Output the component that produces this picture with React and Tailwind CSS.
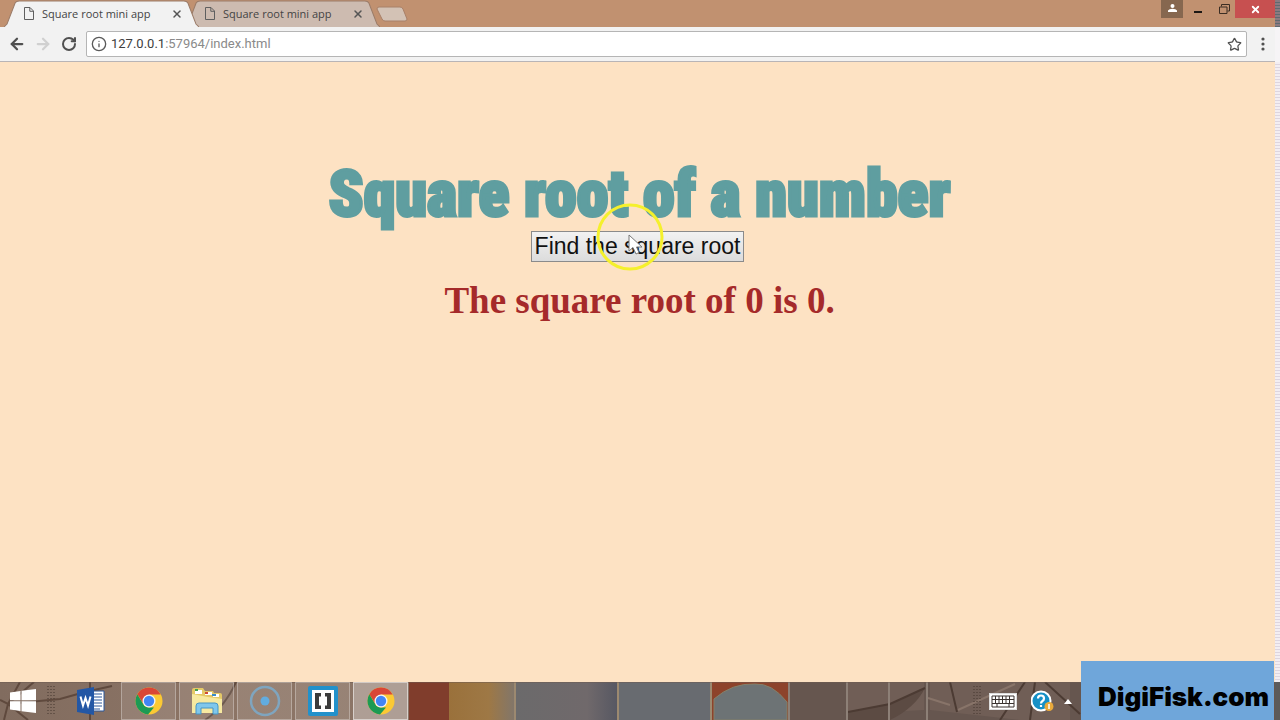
import React, { useState } from "react";
import { ArrowLeft, ArrowRight, RotateCw, Info, Star, X } from "lucide-react";

const PageIcon = () => (
  <svg width="10" height="13" viewBox="0 0 10 13" fill="none" stroke="#5f5f5f">
    <path d="M.5.5h5.5l3.5 3.5v8.5h-9zM5.8.7v3.6h3.5" />
  </svg>
);

const Tab = ({ title, active, onSelect }) => (
  <div
    className={`relative flex items-center w-[195px] h-[27px] pl-5 pr-4 ${
      active ? "z-10" : "-ml-[14px]"
    }`}
  >
    <svg
      className="absolute inset-0 w-full h-full"
      viewBox="0 0 193 27"
      preserveAspectRatio="none"
      aria-hidden="true"
    >
      <path
        d="M0 27 L3 24 L11 3 Q12 1 15 1 H178 Q181 1 182 3 L190 24 L193 27"
        fill={active ? "#f2f2f2" : "#cdbbb0"}
        stroke="#9b7c69"
      />
    </svg>
    <button
      type="button"
      onClick={onSelect}
      className="relative flex items-center flex-1 gap-2 whitespace-nowrap text-left text-[11px] leading-4 text-[#444]"
    >
      <PageIcon />
      {title}
    </button>
    <button type="button" aria-label="Close tab" className="relative text-[#555]">
      <X size={12} strokeWidth={3} />
    </button>
  </div>
);

const TitleBar = () => {
  const [activeTab, setActiveTab] = useState(0);
  const tabs = ["Square root mini app", "Square root mini app"];

  return (
    <div className="flex h-[27px] pl-1 bg-[#c19170]">
      {tabs.map((title, index) => (
        <Tab
          key={index}
          title={title}
          active={index === activeTab}
          onSelect={() => setActiveTab(index)}
        />
      ))}
      <button type="button" aria-label="New tab" className="self-center -ml-1">
        <svg width="32" height="16" viewBox="0 0 32 16">
          <path
            d="M3 1H24Q26 1 27 3L31 13Q31 15 29 15H9Q7 15 6 13L1 3Q1 1 3 1Z"
            fill="#d3c2b5"
            stroke="#a88068"
          />
        </svg>
      </button>
      <div className="flex ml-auto h-[18px]">
        <button
          type="button"
          aria-label="User"
          className="flex justify-center pt-1 w-[22px] bg-[#86674f]"
        >
          <svg width="9" height="8" viewBox="0 0 9 8" fill="#fff">
            <circle cx="4.500" cy="2" r="2" />
            <path d="M0 8V6.500Q1 4.800 4.500 4.800T9 6.500V8Z" />
          </svg>
        </button>
        <button
          type="button"
          aria-label="Minimize"
          className="flex items-center justify-center w-[30px]"
        >
          <svg width="8" height="10" viewBox="0 0 8 10">
            <path d="M0 7h8v2H0z" fill="#1d1713" />
          </svg>
        </button>
        <button
          type="button"
          aria-label="Restore"
          className="flex items-center justify-center w-[22px]"
        >
          <svg width="11" height="10" viewBox="0 0 11 10" fill="none" stroke="#3b2d23">
            <path d="M2.500 2.500V.5h8v6.500h-2" />
            <path d="M.5 3h7.500v6.500H.5z" />
          </svg>
        </button>
        <button
          type="button"
          aria-label="Close"
          className="flex items-center justify-center w-10 bg-[#c75050] text-white"
        >
          <X size={11} strokeWidth={4} />
        </button>
      </div>
    </div>
  );
};

const Toolbar = () => (
  <div className="flex items-center h-[35px] pl-2 bg-[#f2f2f2] border-b border-[#b8b4b6] text-[#505050]">
    <button type="button" aria-label="Back" className="w-[26px]">
      <ArrowLeft size={18} strokeWidth={3} />
    </button>
    <button type="button" aria-label="Forward" className="w-[26px] text-[#d0d0d0]">
      <ArrowRight size={18} strokeWidth={3} />
    </button>
    <button type="button" aria-label="Reload" className="w-[26px] pl-px">
      <RotateCw size={16} strokeWidth={3} />
    </button>
    <div className="flex items-center flex-1 h-[26px] px-1 bg-white border border-[#b5b5b5] rounded-xs">
      <Info size={16} className="text-[#5a5a5a]" />
      <div className="ml-1 flex-1 font-[Roboto,sans-serif] text-[13px] leading-4 text-[#8a8a8a]">
        <span className="text-[#404040]">127.0.0.1</span>:57964/index.html
      </div>
      <button type="button" aria-label="Bookmark">
        <Star size={15} strokeWidth={2} />
      </button>
    </div>
    <button type="button" aria-label="Menu" className="flex justify-center w-6 ml-1">
      <svg width="4" height="14" viewBox="0 0 4 14" fill="#505050">
        <circle cx="2" cy="2" r="1.600" />
        <circle cx="2" cy="7" r="1.600" />
        <circle cx="2" cy="12" r="1.600" />
      </svg>
    </button>
  </div>
);

// Mouse pointer with the yellow highlight ring
const Pointer = () => (
  <svg
    className="absolute left-1/2 top-0 -ml-[42px] -mt-[30px] pointer-events-none"
    width="70"
    height="70"
    viewBox="0 0 70 70"
    aria-hidden="true"
  >
    <circle cx="34" cy="36" r="32" fill="none" stroke="#f5f02c" strokeWidth="3" />
    <path
      d="M33 34V50L37 46.500L40 53L43 51.500L40.500 46H46Z"
      fill="#fff"
      stroke="#777"
    />
  </svg>
);

const Page = () => {
  const [result, setResult] = useState({ value: 0, root: 0 });

  const findRoot = () => {
    const value = Number(window.prompt("Enter a number"));
    setResult({ value, root: Math.sqrt(value) });
  };

  return (
    <main className="flex-1 flex flex-col items-center pt-[97px] bg-[#fde2c3]">
      <h1 className="pl-1 font-[Impact,'Roboto_Condensed','Liberation_Sans_Narrow',sans-serif] font-black text-[64px] leading-[72px] text-[#5f9ea0] [-webkit-text-stroke:3px_#5f9ea0]">
        Square root of a number
      </h1>
      <div className="relative">
        <button
          type="button"
          onClick={findRoot}
          className="block px-[3px] border border-[#8b8b8b] bg-linear-to-b from-[#f2f2f2] to-[#dcdcdc] font-['Liberation_Sans',Arial,sans-serif] text-[23px] leading-[29px] text-[#111]"
        >
          Find the square root
        </button>
        <Pointer />
      </div>
      <h2 className="mt-4 pl-1 font-['Liberation_Serif','Times_New_Roman',serif] font-bold text-[37px] leading-[46px] text-[#a52a2a]">
        The square root of {result.value} is {result.root}.
      </h2>
    </main>
  );
};

const ChromeLogo = () => (
  <svg width="28" height="28" viewBox="0 0 28 28">
    <circle cx="14" cy="14" r="13.500" fill="#fbc934" />
    <path d="M2.300 7.200A13.500 13.500 0 0 1 25.700 7.500H14L8.500 17Z" fill="#d94637" />
    <path d="M2.300 7.200L8.300 17.200A6.500 6.500 0 0 0 14 20.500H19L13 27.500A13.500 13.500 0 0 1 2.300 7.200Z" fill="#1c9a54" />
    <circle cx="14" cy="14" r="6.500" fill="#f4f4f4" />
    <circle cx="14" cy="14" r="5.200" fill="#4285f4" />
  </svg>
);

const WindowsLogo = () => (
  <svg width="26" height="24" viewBox="0 0 26 24" fill="#fff">
    <path d="M0 3.500L10.500 2V11.300H0zM11.500 1.800L26 0V11.300H11.500zM0 12.300H10.500V22L0 20.500zM11.500 12.300H26V24L11.500 22.200z" />
  </svg>
);

const WordLogo = () => (
  <svg width="28" height="28" viewBox="0 0 28 28">
    <path d="M14 4h13v20H14z" fill="#fff" stroke="#2b579a" />
    <path d="M17 7h8M17 10h8M17 13h8M17 16h8M17 19h8M17 22h6" stroke="#2b579a" />
    <path d="M0 3L17 0V28L0 25Z" fill="#2357a5" />
    <path d="M3.500 9.500L6 18.500L8.500 11L11 18.500L13.500 9.500" fill="none" stroke="#fff" strokeWidth="2" />
  </svg>
);

const ExplorerLogo = () => (
  <svg width="32" height="28" viewBox="0 0 32 28">
    <path d="M1 3Q1 1 3 1H12L14 4H22L23 6H29Q31 6 31 8V26H1Z" fill="#e5c967" />
    <path d="M4 3h7v4H4zM14 5h7v3h-7zM22 7h6v3h-6z" fill="#fff" />
    <path d="M4 2h3v2H4z" fill="#45a34c" />
    <path d="M14 5h3v2h-3z" fill="#d04a36" />
    <path d="M21 7h4v2h-4z" fill="#388bc7" />
    <path d="M1 7L17 10L31 12V26H1Z" fill="#f7e9a0" />
    <path d="M5 27V19Q5 16 8 16H24Q27 16 27 19V27H22V21H10V27Z" fill="#80c7ec" stroke="#4796c5" />
  </svg>
);

const RecorderLogo = () => (
  <svg width="32" height="32" viewBox="0 0 32 32">
    <circle cx="16" cy="16" r="14" fill="none" stroke="#7fa5bf" strokeWidth="2.500" />
    <circle cx="16" cy="16" r="4.500" fill="#62acdf" />
  </svg>
);

const BracketsLogo = () => (
  <svg width="30" height="30" viewBox="0 0 30 30">
    <rect width="30" height="30" rx="2" fill="#2291cb" />
    <rect x="4" y="4" width="22" height="22" fill="#fff" />
    <path d="M13 7H7V23H13V19.500H11V10.500H13zM17 7H23V23H17V19.500H19V10.500H17z" fill="#3b3b3b" />
  </svg>
);

const Grip = () => (
  <svg width="8" height="30" viewBox="0 0 8 30" aria-hidden="true">
    <path d="M1 0V30M4 0V30M7 0V30" stroke="#45362e" strokeDasharray="1 2" />
  </svg>
);

const Wallpaper = () => (
  <svg
    className="absolute inset-0 w-full h-full"
    viewBox="0 0 1275 38"
    preserveAspectRatio="none"
    aria-hidden="true"
  >
    <defs>
      <linearGradient id="gold">
        <stop offset="0" stopColor="#9a713b" />
        <stop offset=".6" stopColor="#9e7845" />
        <stop offset="1" stopColor="#81766b" />
      </linearGradient>
      <linearGradient id="steel">
        <stop offset="0" stopColor="#6b6a6b" />
        <stop offset=".7" stopColor="#70696b" />
        <stop offset="1" stopColor="#565762" />
      </linearGradient>
      <linearGradient id="stone">
        <stop offset="0" stopColor="#816c5f" />
        <stop offset=".5" stopColor="#8c7465" />
        <stop offset="1" stopColor="#8b7567" />
      </linearGradient>
    </defs>
    <path d="M0 0h409v38H0z" fill="url(#stone)" />
    <path
      d="M20 0L8 22L0 18M8 22L4 38M8 22L34 0M8 22L60 17L85 10L112 4M8 22L28 38M90 0V38M236 0Q225 25 205 38"
      fill="none"
      stroke="#5f493d"
      strokeWidth="2"
    />
    <path d="M409 0h40v38h-40z" fill="#803d2c" />
    <path d="M449 0h66v38h-66z" fill="url(#gold)" />
    <path d="M515 0h103v38H515z" fill="url(#steel)" />
    <path d="M618 0h94v38h-94z" fill="#686b70" />
    <path d="M712 0h77v38h-77z" fill="#8d432b" />
    <path d="M714 38V17Q732 1 755 2Q772 1 787 20V38Z" fill="#6d7375" stroke="#858069" />
    <path d="M789 0h486v38H789z" fill="#66564f" />
    <path d="M848 0h76v28l-76 4zM930 0h140v38h-50l-90-10z" fill="#705e56" />
    <path d="M848 30L890 22L925 6Q915 26 890 38H848Z" fill="#5c4b43" />
    <path
      d="M848 30L890 22L925 6M950 0L957 30M1035 0L1030 38M1045 0L1080 32M1000 38L1025 0"
      fill="none"
      stroke="#4c3b33"
      strokeWidth="2"
    />
    <path d="M928 16L950 23M958 28L1015 2" fill="none" stroke="#887469" strokeWidth="2" />
    <path d="M515 0V38M618 0V38M711 0V38" stroke="#9c8970" strokeWidth="2" />
    <path d="M789 0V38M847 0V38M889 0V38M927 0V38" stroke="#8d8077" strokeWidth="2" />
    <path d="M0 0H1275" stroke="#6e5d52" />
  </svg>
);

const taskButtons = [
  { name: "Chrome", Logo: ChromeLogo },
  { name: "File Explorer", Logo: ExplorerLogo },
  { name: "Recorder", Logo: RecorderLogo },
  { name: "Brackets", Logo: BracketsLogo },
  { name: "Chrome, index.html", Logo: ChromeLogo, active: true },
];

const Taskbar = () => (
  <footer className="relative h-[38px]">
    <Wallpaper />
    <div className="relative flex items-center h-full pl-[10px] pr-[203px]">
      <button type="button" aria-label="Start">
        <WindowsLogo />
      </button>
      <div className="ml-[11px]">
        <Grip />
      </div>
      <button type="button" aria-label="Word" className="ml-[22px] mr-4">
        <WordLogo />
      </button>
      <div className="flex gap-[3px] h-full">
        {taskButtons.map(({ name, Logo, active }) => (
          <button
            key={name}
            type="button"
            aria-label={name}
            className={`flex items-center justify-center w-[55px] border ${
              active
                ? "bg-white/30 border-white/50"
                : "bg-white/10 border-white/30"
            }`}
          >
            <Logo />
          </button>
        ))}
      </div>
      <div className="flex items-center ml-auto">
        <Grip />
        <button type="button" aria-label="Touch keyboard" className="ml-2">
          <svg width="28" height="17" viewBox="0 0 28 17">
            <rect x=".5" y=".5" width="27" height="16" fill="#fff" stroke="#ddd" />
            <path
              d="M3 3H25V14H3zM3 6.500H25M3 10.500H25M6.500 3V10.500M10 3V10.500M13.500 3V10.500M17 3V10.500M20.500 3V10.500M8 10.500V14M20 10.500V14"
              fill="none"
              stroke="#3a3330"
            />
          </svg>
        </button>
        <button type="button" aria-label="Help" className="ml-[14px]">
          <svg width="23" height="22" viewBox="0 0 23 22">
            <circle cx="10" cy="11" r="9.500" fill="#1690c6" stroke="#fff" strokeWidth="2" />
            <path
              d="M7 8.500Q7 5.500 10 5.500T13 8.500Q13 10 11.500 11Q10 12 10 13.500M10 15V17"
              fill="none"
              stroke="#fff"
              strokeWidth="2.200"
            />
            <circle cx="18" cy="16.500" r="4.500" fill="#eaaa3b" />
            <path d="M18 14V19" stroke="#fff" strokeWidth="1.500" />
          </svg>
        </button>
        <button type="button" aria-label="Show hidden icons" className="ml-[10px]">
          <svg width="8" height="5" viewBox="0 0 8 5">
            <path d="M0 5L4 0L8 5Z" fill="#fff" />
          </svg>
        </button>
      </div>
    </div>
  </footer>
);

// Striped sliver past the right edge of the window
const EdgeStrip = () => (
  <div className="flex flex-col w-[5px]">
    <div className="h-[27px] bg-[repeating-linear-gradient(to_bottom,#8b7a80_0_2px,#5f6a70_2px_3px)]" />
    <div className="h-[35px] bg-[#f6f4f6]" />
    <div className="flex-1 bg-[repeating-linear-gradient(to_bottom,#f3eef2_0_2px,#ddd5df_2px_3px)]" />
    <div className="h-[38px] bg-[#5c5a5a]" />
  </div>
);

const App = () => (
  <div className="relative flex h-screen overflow-hidden font-['Open_Sans','Segoe_UI',sans-serif]">
    <div className="flex flex-col flex-1 min-w-0">
      <TitleBar />
      <Toolbar />
      <Page />
      <Taskbar />
    </div>
    <EdgeStrip />
    <div className="absolute right-[6px] bottom-0 flex items-center justify-center w-[193px] h-[59px] pt-3 pl-3 bg-[#6fa6da] font-[Inter,sans-serif] font-black text-[26px] leading-8 text-black">
      DigiFisk.com
    </div>
  </div>
);

export default App;
